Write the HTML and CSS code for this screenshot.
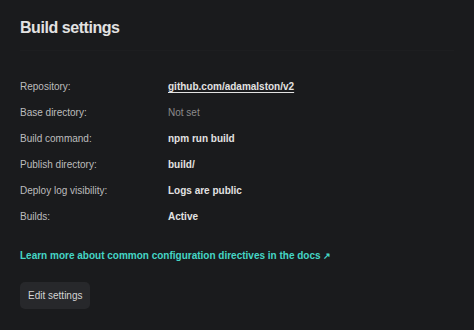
FILE: index.html
```html
<!DOCTYPE html>
<html lang="en">
<head>
    <meta charset="UTF-8">
    <meta name="viewport" content="width=device-width, initial-scale=1.0">
    <title>Build settings</title>
    <link rel="stylesheet" href="styles.css">
</head>
<body>
    <section class="card">
        <h2 class="card-title">Build settings</h2>

        <dl class="settings">
            <dt>Repository:</dt>
            <dd><a href="#" class="repo">github.com/adamalston/v2</a></dd>
            <dt>Base directory:</dt>
            <dd class="muted">Not set</dd>
            <dt>Build command:</dt>
            <dd>npm run build</dd>
            <dt>Publish directory:</dt>
            <dd>build/</dd>
            <dt>Deploy log visibility:</dt>
            <dd>Logs are public</dd>
            <dt>Builds:</dt>
            <dd>Active</dd>
        </dl>

        <a href="#" class="docs-link">Learn more about common configuration directives in the docs <span class="arrow">&#8599;</span></a>

        <button class="btn">Edit settings</button>
    </section>
</body>
</html>
```

FILE: styles.css
```css
body {
    margin: 0;
    padding: 0;
    background-color: #1a1b1d;
    font-family: 'Liberation Sans', Arial, sans-serif;
    color: #c4c4c4;
}

.card {
    padding: 16px 20px 20px;
}

.card-title {
    margin: 0;
    font-size: 16px;
    font-weight: 700;
    letter-spacing: -0.45px;
    color: #e2e2e2;
    line-height: 24px;
    padding-bottom: 10px;
    border-bottom: 1px solid #1d1e20;
}

.settings {
    display: grid;
    grid-template-columns: 148px 1fr;
    row-gap: 12px;
    margin: 29px 0 0;
    font-size: 10px;
    line-height: 14px;
}

.settings dt {
    color: #bdbdbd;
}

.settings dd {
    margin: 0;
    font-weight: 700;
    color: #e2e2e2;
}

.settings dd.muted {
    font-weight: 400;
    color: #8c8c8c;
}

.repo {
    color: #e2e2e2;
    text-decoration: underline;
    text-underline-offset: 2px;
}

.docs-link {
    display: block;
    margin-top: 25px;
    font-size: 10px;
    line-height: 14px;
    font-weight: 700;
    color: #45d6c6;
    text-decoration: none;
}

.arrow {
    font-size: 9px;
}

.btn {
    display: block;
    margin-top: 19px;
    padding: 0 8px;
    height: 27px;
    background-color: #27282b;
    color: #d4d4d4;
    font-family: inherit;
    font-size: 10px;
    font-weight: 400;
    border: none;
    border-radius: 5px;
    cursor: pointer;
}
```
